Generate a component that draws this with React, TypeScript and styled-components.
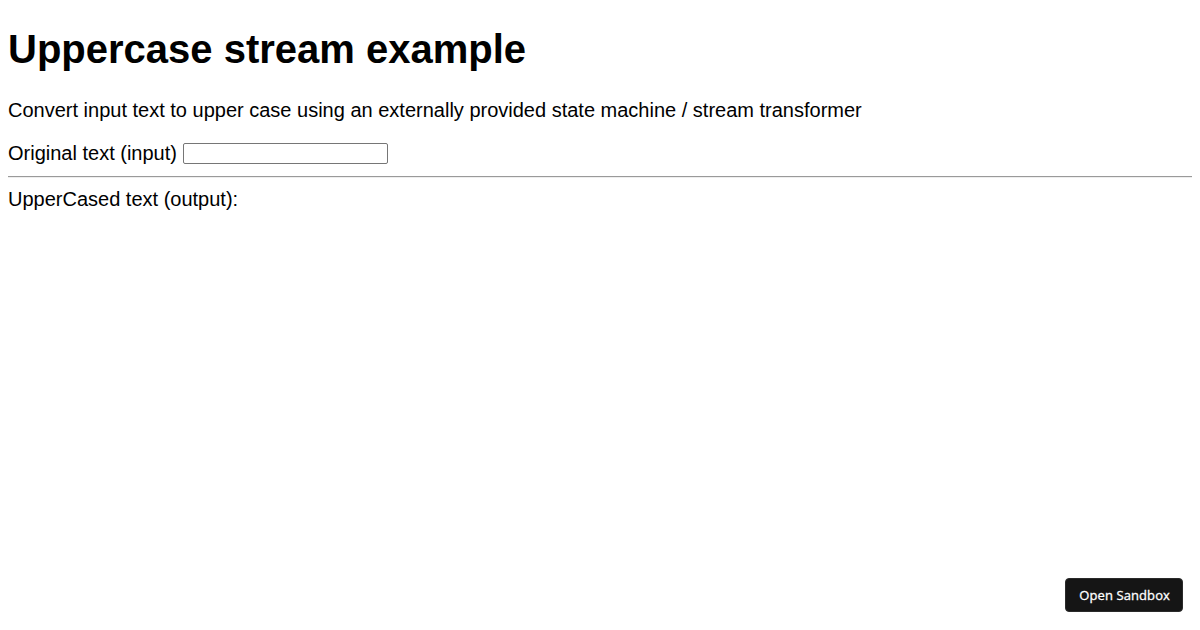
import React from "react";
import styled, { createGlobalStyle } from "styled-components";

const Global = createGlobalStyle`
  html, body { background: #fff; }
  body {
    margin: 8px;
    font-family: "Liberation Sans", Arial, sans-serif;
    font-size: 20px;
    color: #000;
  }
`;

const Title = styled.h1`
  font-size: 40px;
  font-weight: bold;
  margin: 18.8px 0 26.8px;
`;

const Lead = styled.p`
  margin: 20px 0;
`;

const Field = styled.div`
  display: flex;
  align-items: center;
  gap: 6px;
`;

const TextInput = styled.input`
  width: 205px;
  height: 21px;
  box-sizing: border-box;
  border: 1px solid #767676;
  border-radius: 2px;
  padding: 1px 2px;
  font-size: 13px;
`;

const Rule = styled.hr`
  margin: 11px 0 10px;
  border: none;
  border-top: 1px solid #9a9a9a;
  border-bottom: 1px solid #eeeeee;
  height: 0;
`;

const Output = styled.div``;

const SandboxButton = styled.a`
  position: fixed;
  right: 17px;
  bottom: 18px;
  background: #151515;
  color: #ffffff;
  font-family: "Open Sans", sans-serif;
  font-size: 13px;
  font-weight: 400;
  -webkit-text-stroke: 0.3px #ffffff;
  letter-spacing: 0.1px;
  padding: 0 12px 0 13px;
  height: 34px;
  display: flex;
  align-items: center;
  border-radius: 4px;
  border: 1px solid #2a2a2a;
  text-decoration: none;
  box-sizing: border-box;
`;

export default function App() {
  return (
    <>
      <Global />
      <Title>Uppercase stream example</Title>
      <Lead>
        Convert input text to upper case using an externally provided state
        machine / stream transformer
      </Lead>
      <Field>
        <label htmlFor="orig">Original text (input)</label>
        <TextInput id="orig" type="text" />
      </Field>
      <Rule />
      <Output>UpperCased text (output):</Output>
      <SandboxButton href="#">Open Sandbox</SandboxButton>
    </>
  );
}
